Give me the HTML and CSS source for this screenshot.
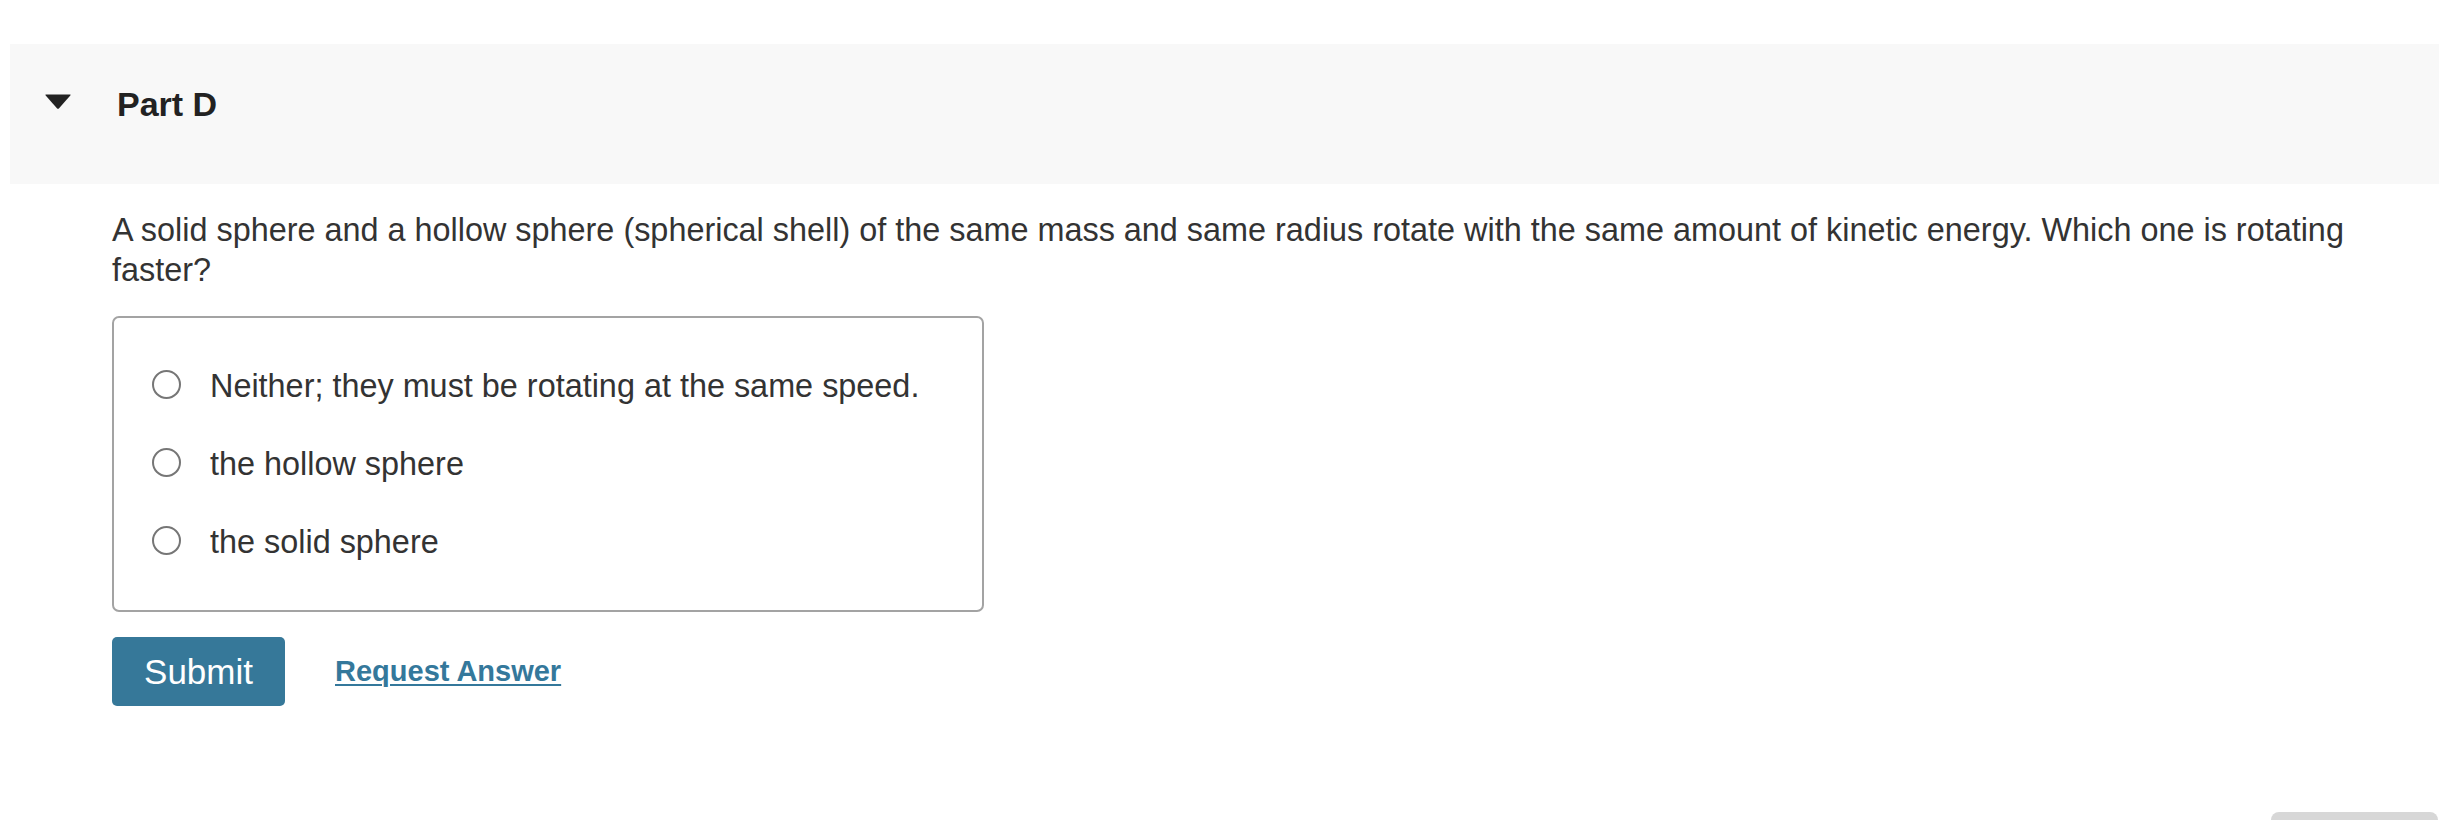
FILE: index.html
```html
<!DOCTYPE html>
<html lang="en">
<head>
<meta charset="utf-8">
<title>Part D</title>
<link rel="stylesheet" href="styles.css">
</head>
<body>
<div class="part">
  <div class="part-header">
    <svg class="caret" width="26" height="15" viewBox="0 0 26 15" aria-hidden="true"><path d="M1 0.5 H25 Q26.2 0.5 25.3 1.6 L14.1 14.2 Q13 15.3 11.9 14.2 L0.7 1.6 Q-0.2 0.5 1 0.5 Z" fill="#222"/></svg>
    <h2 class="part-title">Part D</h2>
  </div>
  <div class="part-body">
    <p class="question">A solid sphere and a hollow sphere (spherical shell) of the same mass and same radius rotate with the same amount of kinetic energy. Which one is rotating faster?</p>
    <div class="choices">
      <label class="choice"><span class="radio"></span><span class="choice-text">Neither; they must be rotating at the same speed.</span></label>
      <label class="choice"><span class="radio"></span><span class="choice-text">the hollow sphere</span></label>
      <label class="choice"><span class="radio"></span><span class="choice-text">the solid sphere</span></label>
    </div>
    <div class="actions">
      <button class="submit" type="button">Submit</button>
      <a class="request" href="#">Request Answer</a>
    </div>
  </div>
  <div class="footer">
    <div class="feedback-tab"></div>
  </div>
</div>
</body>
</html>
```

FILE: styles.css
```css
html {
  overflow: hidden;
}

body {
  margin: 0;
  background: #ffffff;
  font-family: "Liberation Sans", Arial, sans-serif;
  color: #333333;
}

.part {
  margin: 44px 3px 0 10px;
}

.part-header {
  box-sizing: border-box;
  height: 140px;
  padding-top: 41px;
  background: #f8f8f8;
  display: flex;
  align-items: flex-start;
}

.caret {
  display: block;
  margin: 9px 46px 0 35px;
  flex: none;
}

.part-title {
  margin: 0;
  font-size: 34px;
  line-height: 39px;
  font-weight: bold;
  color: #222222;
}

.part-body {
  padding: 0 37px 0 102px;
}

.question {
  margin: 26px 0 0;
  font-size: 32.4px;
  line-height: 40px;
  color: #333333;
}

.choices {
  box-sizing: border-box;
  width: 872px;
  margin-top: 26px;
  padding: 48px 0 48px 38px;
  border: 2px solid #a3a3a3;
  border-radius: 7px;
  display: flex;
  flex-direction: column;
  gap: 38px;
}

.choice {
  display: flex;
  align-items: center;
  height: 40px;
  font-size: 32.4px;
  line-height: 40px;
  color: #333333;
}

.radio {
  box-sizing: border-box;
  width: 29px;
  height: 29px;
  border: 2px solid #767676;
  border-radius: 50%;
  margin: 0 29px 4px 0;
  flex: none;
  background: #ffffff;
}

.actions {
  margin-top: 25px;
  display: flex;
  align-items: center;
  gap: 50px;
}

.submit {
  width: 173px;
  height: 69px;
  padding: 0;
  border: none;
  border-radius: 5px;
  background: #367899;
  color: #ffffff;
  font-family: "Liberation Sans", Arial, sans-serif;
  font-size: 35px;
}

.request {
  font-size: 29px;
  font-weight: bold;
  color: #34789b;
  text-decoration: underline;
  text-decoration-thickness: 2px;
  text-underline-offset: 3px;
}

.footer {
  margin-top: 106px;
  display: flex;
  justify-content: flex-end;
  padding-right: 1px;
}

.feedback-tab {
  width: 167px;
  height: 40px;
  background: #d7d7d7;
  border-radius: 8px 8px 0 0;
}
```
